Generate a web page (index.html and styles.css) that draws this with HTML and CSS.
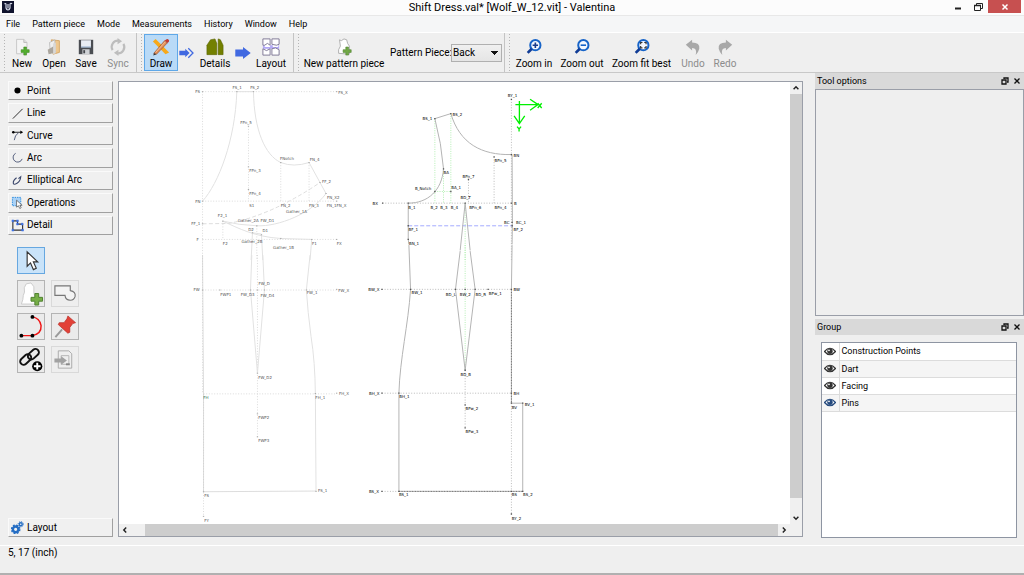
FILE: index.html
```html
<!DOCTYPE html>
<html lang="en">
<head>
<meta charset="utf-8">
<title>Shift Dress.val* [Wolf_W_12.vit] - Valentina</title>
<link rel="stylesheet" href="styles.css">
</head>
<body>
<div class="window">
<header class="titlebar">
  <svg class="applogo" viewBox="0 0 12 12"><rect width="12" height="12" fill="#10142e"/><path d="M2.5 3q1-1 1.500 0v4q.5 2 2 2T8 7V3q1-1.500 2 0M6 3v4.500" fill="none" stroke="#dfe4f4" stroke-width="1.100"/></svg>
  <h1 class="title">Shift Dress.val* [Wolf_W_12.vit] - Valentina</h1>
  <div class="winbtns">
    <button class="winbtn" aria-label="Minimize"><svg viewBox="0 0 12 12" width="12" height="12"><path d="M3 7.500h6" stroke="#222" stroke-width="2"/></svg></button>
    <button class="winbtn" aria-label="Restore"><svg viewBox="0 0 12 12" width="12" height="12"><path d="M4.500 4V2.500h6v5H9M2.500 4.500h6v5h-6z" fill="none" stroke="#222"/><path d="M2 4.500h7" stroke="#222" stroke-width="1.500"/></svg></button>
    <button class="winbtn close" aria-label="Close"><svg viewBox="0 0 12 12" width="12" height="12"><path d="M3.500 3.500l5 5m0-5l-5 5" stroke="#fff" stroke-width="1.500"/></svg></button>
  </div>
</header>
<nav class="menubar">
  <button>File</button><button>Pattern piece</button><button>Mode</button><button>Measurements</button><button>History</button><button>Window</button><button>Help</button>
</nav>
<div class="toolbars">
  <div class="toolbar file">
    <button class="tool"><svg viewBox="0 0 20 20"><path d="M4 1.500h8l3.500 3.500v12.500H4z" fill="#f4f4f4" stroke="#c4c4c4"/><path d="M12 1.500V5h3.500" fill="#ddd" stroke="#bbb"/><path d="M12 10h3v3h3v3h-3v3h-3v-3H9v-3h3z" fill="#52ad2e" stroke="#3c8420" stroke-width=".6"/></svg>New</button>
    <button class="tool"><svg viewBox="0 0 20 20"><path d="M7 2l9 1v13l-7 2z" fill="#eec78e" stroke="#d5a768"/><path d="M5 5l6-3v11l-5 4z" fill="#eee" stroke="#aaa" stroke-width=".7"/><path d="M3 13l7-4 2 7-8 2z" fill="#aaa59d"/><path d="M9 6l3-1v12l-3 1z" fill="#d8d8d8"/></svg>Open</button>
    <button class="tool"><svg viewBox="0 0 20 20"><path d="M2 2h16v16H2z" fill="#4a4d52"/><path d="M4.500 2.500h11v8h-11z" fill="#e8edf4"/><path d="M6 12.500h8V18H6z" fill="#cfd2d6"/><path d="M7 13.500h2V17H7z" fill="#44474c"/><path d="M4.500 10h11" stroke="#87a4c6"/></svg>Save</button>
    <button class="tool" disabled><svg viewBox="0 0 20 20"><path d="M4 13.500A7 7 0 0 1 11 3M16 6.500A7 7 0 0 1 9 17" fill="none" stroke="#bdbdbd" stroke-width="2.400"/><path d="M9.500 0l5 3.500-5 3.500zM10.500 13l-5 3.500 5 3.500z" fill="#bdbdbd"/></svg>Sync</button>
  </div>
  <div class="toolbar modes">
    <button class="tool checked"><svg viewBox="0 0 20 20"><path d="M4 1L1 4l14 14 4-2z" fill="#f7a91c"/><path d="M2 17L14 3l3 2.500L5 18z" fill="#e28f58" stroke="#964b28" stroke-width=".7"/><path d="M14 3q3-3 4.500-1T17 5.500z" fill="#c43c32"/><path d="M2 17l-.5 2.500L5 18z" fill="#333"/><path d="M4 16L15 4" stroke="#f6c294"/></svg>Draw</button>
    <svg class="arrow" viewBox="0 0 18 14"><path d="M0 4.500h7V2l5 5-5 5V9.500H0z" fill="#4169e1"/><path d="M10.500 1.500l5.500 5.500-5.500 5.500" fill="none" stroke="#4169e1" stroke-width="1.500"/></svg>
    <button class="tool"><svg viewBox="0 0 20 20"><path d="M1 18.500V8L5 2l5-1 2 5v12.500z" fill="#738000" stroke="#565f00" stroke-width=".6"/><path d="M13.500 18.500V1q3 0 3.500 3l2 4v10.500z" fill="#738000" stroke="#565f00" stroke-width=".6"/></svg>Details</button>
    <svg class="arrow" viewBox="0 0 18 14"><path d="M0 3h9V0l9 7-9 7v-3H0z" fill="#4169e1"/></svg>
    <button class="tool"><svg viewBox="0 0 20 20"><path d="M1 1h18v18H1z" fill="#fff"/><path d="M1 8h18v4H1z" fill="#b3a9f5"/><path d="M3 8l3-2 3 2v2H3zM12 7l4 1 2-1v3h-6z" fill="#fff"/><path d="M1 1h8v7l-3-2-3 2H1zM11 1h8v6l-3 1-5-1zM1 12l4 2 4-2v7H1zM11 12l4-1 4 2v6h-8z" fill="#fff" stroke="#77718f"/></svg>Layout</button>
  </div>
  <div class="toolbar pieces">
    <button class="tool"><svg viewBox="0 0 20 20"><path d="M5 2l2 1 3-2 3 1 1 4 2 3v9l-12-1V13l2-4z" fill="#fff" stroke="#aaa"/><path d="M12 10h3v3h3v3h-3v3h-3v-3H9v-3h3z" fill="#71a746" stroke="#4d7e2d" stroke-width=".6"/></svg>New pattern piece</button>
    <label for="piece">Pattern Piece:</label><select id="piece"><option>Back</option><option>Front</option></select>
  </div>
  <div class="toolbar zooms">
    <button class="tool"><svg viewBox="0 0 20 20"><circle cx="11.500" cy="8" r="5.700" fill="#f4f8ff" stroke="#1764c8" stroke-width="2.200"/><path d="M7.500 12L3 16.500" stroke="#103c96" stroke-width="3"/><path d="M11.500 5v6m-3-3h6" stroke="#173b8c" stroke-width="1.800"/></svg>Zoom in</button>
    <button class="tool"><svg viewBox="0 0 20 20"><circle cx="11.500" cy="8" r="5.700" fill="#f4f8ff" stroke="#1764c8" stroke-width="2.200"/><path d="M7.500 12L3 16.500" stroke="#103c96" stroke-width="3"/><path d="M8.500 8h6" stroke="#1764c8" stroke-width="1.800"/></svg>Zoom out</button>
    <button class="tool"><svg viewBox="0 0 20 20"><circle cx="11.500" cy="8" r="5.700" fill="#f4f8ff" stroke="#1764c8" stroke-width="2.200"/><path d="M7.500 12L3 16.500" stroke="#103c96" stroke-width="3"/><path d="M8.500 7V5h2m2 0h2v2m0 2v2h-2m-2 0h-2V9" fill="none" stroke="#333" stroke-width="1.300"/></svg>Zoom fit best</button>
    <button class="tool" disabled><svg viewBox="0 0 20 20"><path d="M2 7.500L9 2v3q9 0 8 7-1 4-4 7 2-8-4-8v3z" fill="#a8a8a8"/></svg>Undo</button>
    <button class="tool" disabled><svg viewBox="0 0 20 20"><path d="M18 7.500L11 2v3q-9 0-8 7 1 4 4 7-2-8 4-8v3z" fill="#a8a8a8"/></svg>Redo</button>
  </div>
</div>
<main class="main">
  <aside class="toolbox">
    <div class="sections">
      <button class="section"><svg viewBox="0 0 14 14"><circle cx="7" cy="7" r="3.300"/></svg>Point</button>
      <button class="section"><svg viewBox="0 0 14 14"><path d="M2 12.500L12.500 2" stroke="#222"/></svg>Line</button>
      <button class="section"><svg viewBox="0 0 14 14"><path d="M1 3.500h11" stroke="#111"/><circle cx="2.500" cy="3.500" r="1.300"/><path d="M10 1.500l3 2-3 2z"/><path d="M3.500 12Q4 7 8 4" fill="none" stroke="#4d5877"/></svg>Curve</button>
      <button class="section"><svg viewBox="0 0 14 14"><path d="M5 2.500a5 5 0 1 0 7 6" fill="none" stroke="#4d5877"/></svg>Arc</button>
      <button class="section"><svg viewBox="0 0 14 14"><path d="M6 4q-4 3-3.500 6 .5 2 4 0t4-7L8 5" fill="none" stroke="#39456a" stroke-width="1.200"/></svg>Elliptical Arc</button>
      <button class="section"><svg viewBox="0 0 14 14"><path d="M1.500 1.500h9v9h-9z" fill="#a9d1f6" stroke="#268ae0" stroke-dasharray="1.500 1"/><path d="M6 4.500v7.500l2-1.500 1.500 3 1.500-1-1.500-2.500H12z" fill="#fff" stroke="#555" stroke-width=".8"/></svg>Operations</button>
      <button class="section"><svg viewBox="0 0 14 14"><path d="M2 2h5v3.500h5.500V12H2z" fill="none" stroke="#333" stroke-width="1.200"/><path d="M1 1h2v2h-2zm5 0h2v2h-2zm0 3.500h2v2h-2zM11 4.500h2v2h-2zM1 11h2v2h-2zm10.500 0h2v2h-2z" fill="#3f73e8" stroke="#3f73e8" stroke-width=".5"/></svg>Detail</button>
    </div>
    <div class="tools">
      <button class="square on" aria-label="Select"><svg viewBox="0 0 26 26"><path d="M9 4v15l3.500-3.500 3 7 3-1.500-3-6.500H20z" fill="#fff" stroke="#333" stroke-width="1.200"/></svg></button>
      <span></span>
      <button class="square" aria-label="New detail"><svg viewBox="0 0 26 26"><path d="M8 3l5-1 3 4v7l3 11H3q2-5 2-9 2-3 1-8z" fill="#fff" stroke="#ccc"/><path d="M17 13h4v4h4v4h-4v4h-4v-4h-4v-4h4z" fill="#76ae47" stroke="#4f802f"/></svg></button>
      <button class="square off" aria-label="Union"><svg viewBox="0 0 26 26"><path d="M2.500 5h16v5q6 1 5 6-1 4-5 4-5 0-5.500-5H2.500z" fill="#f3f3f3" stroke="#777" stroke-width="1.200"/></svg></button>
      <button class="square" aria-label="Internal path"><svg viewBox="0 0 26 26"><path d="M3 22.500h11Q24 21 23.500 12 22 4 14 3" fill="none" stroke="#f01414" stroke-width="1.500"/><circle cx="3" cy="22.500" r="2"/><circle cx="14.500" cy="22.500" r="2"/><circle cx="14.500" cy="3" r="2"/></svg></button>
      <button class="square" aria-label="Pin"><svg viewBox="0 0 26 26"><path d="M10 16l-7 8" stroke="#999" stroke-width="2"/><path d="M16 2l8 7-3 1-3 4v5l-2 1L6 11l1-2h5l3-4z" fill="#e24137" stroke="#b52a24" stroke-width=".7"/></svg></button>
      <button class="square" aria-label="Link points"><svg viewBox="0 0 26 26"><g fill="none" stroke="#111" stroke-width="2"><rect x="9" y="4" width="13" height="7" rx="3.500" transform="rotate(-42 15.500 7.500)"/><rect x="1" y="9.500" width="13" height="7" rx="3.500" transform="rotate(-42 7.500 13)"/></g><circle cx="19.500" cy="20" r="5.300"/><path d="M19.500 16.500v7M16 20h7" stroke="#fff" stroke-width="2"/></svg></button>
      <button class="square off" aria-label="Insert node"><svg viewBox="0 0 26 26"><path d="M6 4h11l3 3v15H6z" fill="#eee" stroke="#aaa"/><path d="M9 9h8v9H9z" fill="none" stroke="#b5b5b5"/><path d="M2 12h7V9.500l6 4.500-6 4.500V16H2z" fill="#a2a2a2"/><path d="M14 18h4" stroke="#888" stroke-width="2"/></svg></button>
    </div>
    <button class="section layout"><svg viewBox="0 0 14 14"><circle cx="5" cy="9" r="3" fill="none" stroke="#256ec4" stroke-width="2.600"/><circle cx="5" cy="9" r="4.500" fill="none" stroke="#256ec4" stroke-width="1.500" stroke-dasharray="2 1.530"/><circle cx="10.500" cy="3.500" r="1.600" fill="none" stroke="#256ec4" stroke-width="1.500"/><circle cx="10.500" cy="3.500" r="2.800" fill="none" stroke="#256ec4" stroke-dasharray="1.200 1"/></svg>Layout</button>
  </aside>
  <section class="canvas">
    <svg class="scene" viewBox="0 0 2016 1323" preserveAspectRatio="xMinYMin meet">
      <g class="front" transform="translate(199 -5)">
        <path class="dot" d="M52 34H455M52 34V478M190 138V363M52 363H455M287 247V363M372 247V363M52 478H455M113 423V478M215 437V540"/>
        <path class="line" d="M155 34H205M155 34C150 180 100 310 52 363M205 34C207 150 240 225 287 247Q325 262 372 247L423 340C380 400 280 440 215 437Q160 435 113 423C160 445 210 470 285 475L380 478M202 458L198 540M229 462L233 540M202 458L215 460 229 462M380 478L375 540"/>
        <path class="dash" d="M52 431L130 430Q260 405 405 307"/>
        <path class="node" d="M50 34h4M153 34h4M203 34h4M188 138h4M188 260h4M188 328h4M285 247h4M370 247h4M403 307h4M421 340h4M50 363h4M50 431h4M111 423h4M213 437h4M200 458h4M227 464h4M285 475h4M378 478h4M453 34h4M453 363h4M453 478h4"/>
        <text x="30" y="38">FS</text><text x="142" y="26">FS_1</text><text x="195" y="26">FS_2</text><text x="460" y="40">FS_X</text><text x="165" y="130">FPn_5</text><text x="192" y="276">FPn_3</text><text x="192" y="344">FPn_4</text><text x="285" y="240">FNotch</text><text x="374" y="242">FN_4</text><text x="411" y="308">FF_2</text><text x="426" y="357">FN_X2</text><text x="30" y="368">FN</text><text x="192" y="380">S1</text><text x="287" y="380">FN_2</text><text x="372" y="380">FN_3</text><text x="425" y="380">FN_1FN_X</text><text x="303" y="398">Gather_1A</text><text x="98" y="412">F2_1</text><text x="158" y="425">Gather_2A</text><text x="226" y="427">FW_D1</text><text x="18" y="435">FF_1</text><text x="189" y="452">D2</text><text x="232" y="456">D1</text><text x="34" y="482">F</text><text x="113" y="494">F2</text><text x="169" y="490">Gather_2B</text><text x="264" y="506">Gather_1B</text><text x="381" y="494">F1</text><text x="455" y="494">FX</text>
      </g>
      <g class="front" transform="translate(199 520)">
        <path class="dot" d="M52 -47V417M52 105H455M217 0V547M55 417H455M55 417V785"/>
        <path class="line" d="M200 0L196 105 217 355 238 105 233 0M375 0L364 105Q368 170 378 245 390 320 391 417L393 710"/>
        <path class="line strong" d="M52 0L55 417V711L393 709"/>
        <path class="node" d="M50 105h4M102 105h4M194 105h4M215 105h4M236 105h4M362 105h4M215 355h4M389 416h4M215 477h4M215 546h4M53 711h4M391 710h4M53 785h4M453 103h4M453 415h4"/>
        <text x="25" y="108">FW</text><text x="105" y="122">FWP1</text><text x="167" y="124">FW_D3</text><text x="220" y="91">FW_D</text><text x="226" y="126">FW_D4</text><text x="365" y="117">FW_1</text><text x="460" y="110">FW_X</text><text x="219" y="372">FW_D2</text><text class="green" x="54" y="432">FH</text><text x="391" y="432">FH_1</text><text x="462" y="421">FH_X</text><text x="219" y="493">FWP2</text><text x="219" y="563">FWP3</text><text x="57" y="727">FS</text><text x="399" y="713">FS_1</text><text x="57" y="801">FY</text>
      </g>
      <g class="back" transform="translate(724 -5)">
        <path class="dot" d="M68 369H457M403 230V369M326 298V369M455 57V540"/>
        <path class="guide" d="M225 115V369M251 266V369M273 100V369M225 334H273M316 369V540"/>
        <path class="facing" d="M145 437H457"/>
        <path class="line" d="M225 115L273 100C300 190 365 225 455 223M225 115Q245 190 251 266C246 330 205 369 145 369V478L147 493M316 369L301 511M316 369L331 511M457 223L458 430 457 493"/>
        <path class="node" d="M66 369h4M143 369h4M223 115h4M271 100h4M249 266h4M223 334h4M271 334h4M314 369h4M324 298h4M401 230h4M453 57h4M453 223h4M453 369h4M455 427h4M143 437h4M455 437h4M143 478h4"/>
        <g class="axis"><path d="M467 73H535M511 57L535 73 511 90M479 62V130M463 107L479 130 495 107M534 69l12 14m0-14l-12 14M472 139l6 7 6-7m-6 7v8"/></g>
        <text x="444" y="51">BY_1</text><text x="188" y="119">BS_1</text><text x="278" y="107">BS_2</text><text x="461" y="230">BN</text><text x="404" y="246">BPn_5</text><text x="251" y="281">BA</text><text x="308" y="292">BPn_7</text><text x="165" y="330">B_Notch</text><text x="274" y="328">BA_1</text><text x="302" y="357">BD_T</text><text x="38" y="375">BX</text><text x="145" y="387">B_1</text><text x="212" y="387">B_2</text><text x="241" y="387">B_3</text><text x="273" y="387">B_4</text><text x="328" y="387">BPn_6</text><text x="404" y="387">BPn_4</text><text x="463" y="374">B</text><text x="433" y="431">BC</text><text x="469" y="433">BC_1</text><text x="461" y="454">BF_2</text><text x="146" y="454">BF_1</text><text x="147" y="495">BN_1</text>
      </g>
      <g class="back" transform="translate(724 490)">
        <path class="dot" d="M66 133H455M66 445H455M316 376V549M66 740H489M455 475V808"/>
        <path class="guide" d="M316 0V376"/>
        <path class="line" d="M147 0L152 133C145 240 120 340 117 445V740H489V475H455M301 18L287 133 316 376 346 133 331 18M457 0L455 133V475"/>
        <path class="dot strong" d="M455 133V475M117 740H489"/>
        <path class="node" d="M64 133h4M150 133h4M285 133h4M314 133h4M344 133h4M383 133h4M453 133h4M64 445h4M115 445h4M314 376h4M314 480h4M314 549h4M453 445h4M453 475h4M487 475h4M64 740h4M115 740h4M453 740h4M487 740h4M453 808h4"/>
        <text x="25" y="138">BW_X</text><text x="155" y="147">BW_1</text><text x="258" y="152">BD_L</text><text x="300" y="152">BW_2</text><text x="347" y="152">BD_R</text><text x="387" y="150">BPw_1</text><text x="461" y="138">BW</text><text x="302" y="393">BD_B</text><text x="27" y="449">BH_X</text><text x="118" y="460">BH_1</text><text x="461" y="449">BH</text><text x="456" y="491">BV</text><text x="495" y="483">BV_1</text><text x="317" y="496">BPw_2</text><text x="317" y="566">BPw_3</text><text x="27" y="744">BS_X</text><text x="117" y="755">BS_1</text><text x="456" y="755">BS</text><text x="490" y="755">BS_2</text><text x="456" y="825">BY_2</text>
      </g>
    </svg>
    <div class="vscroll"><svg viewBox="0 0 10 10"><path d="M3 6l2-2 2 2"/></svg><i class="thumb"></i><svg viewBox="0 0 10 10"><path d="M3 4l2 2 2-2"/></svg></div>
    <div class="hscroll"><svg viewBox="0 0 10 10"><path d="M6 3l-2 2 2 2"/></svg><i class="thumb"></i><svg viewBox="0 0 10 10"><path d="M4 3l2 2-2 2"/></svg></div>
  </section>
  <aside class="docks">
    <section class="dock options">
      <header><h2>Tool options</h2><button aria-label="Float tool options"><svg viewBox="0 0 8 8"><path d="M3 2V1h4v4H6M1 3h4v4H1z"/></svg></button><button aria-label="Close tool options"><svg viewBox="0 0 8 8"><path d="M1.500 1.500l5 5m0-5l-5 5"/></svg></button></header>
      <div class="frame"></div>
    </section>
    <section class="dock group">
      <header><h2>Group</h2><button aria-label="Float group"><svg viewBox="0 0 8 8"><path d="M3 2V1h4v4H6M1 3h4v4H1z"/></svg></button><button aria-label="Close group"><svg viewBox="0 0 8 8"><path d="M1.500 1.500l5 5m0-5l-5 5"/></svg></button></header>
      <div class="list">
        <table>
          <tr><td><svg viewBox="0 0 12 9"><use href="#eye"/></svg></td><td>Construction Points</td></tr>
          <tr><td><svg viewBox="0 0 12 9"><use href="#eye"/></svg></td><td>Dart</td></tr>
          <tr><td><svg viewBox="0 0 12 9"><use href="#eye"/></svg></td><td>Facing</td></tr>
          <tr class="current"><td><svg viewBox="0 0 12 9"><use href="#eye"/></svg></td><td>Pins</td></tr>
        </table>
      </div>
    </section>
  </aside>
</main>
<footer class="status">5, 17 (inch)</footer>
</div>
<svg class="defs"><defs><g id="eye"><path d="M.5 4.500Q6-2 11.500 4.500 6 11 .5 4.500z" fill="none" stroke="currentColor" stroke-width="1.200"/><circle cx="6" cy="4.200" r="2.700" fill="currentColor"/><circle cx="5" cy="3.300" r=".9" fill="#fff"/></g></defs></svg>
</body>
</html>
```

FILE: styles.css
```css
* { box-sizing: border-box; }
html, body { height: 100%; margin: 0; }
body { background: #efefef; color: #000; font: 10px/12px Roboto, "Noto Sans", sans-serif; }
button { font: inherit; color: inherit; background: none; border: 0; padding: 0; margin: 0; }
svg { display: block; flex: none; }
h1, h2 { margin: 0; font-weight: normal; }
.defs { position: absolute; width: 0; height: 0; }
.window { min-height: 100vh; display: flex; flex-direction: column; border-bottom: 2px solid #b0b0b0; }

.titlebar { height: 16px; display: flex; align-items: flex-start; padding: 0 3px 0 2px; background: #fcfcfc; border-bottom: 1px solid #e8e8e8; }
.applogo { width: 12px; height: 12px; margin-top: 1px; }
.title { flex: 1; text-align: center; padding-left: 62px; font-size: 11px; line-height: 15px; }
.winbtns { display: flex; }
.winbtn { width: 20px; height: 13px; display: flex; justify-content: center; align-items: center; }
.winbtn.close { width: 33px; background: #c75050; }

.menubar { height: 17px; display: flex; gap: 12px; padding: 0 6px; background: #f5f6f7; border-bottom: 1px solid #fff; font-size: 9px; }

.toolbars { height: 40px; display: flex; border-bottom: 1px solid #c8c8c8; }
.toolbar { display: flex; align-items: stretch; padding: 1px 2px 1px 7px; border-right: 1px solid #c4c4c4; background: radial-gradient(circle, #b5b5b5 1px, transparent 1px) 3px 0 / 3px 3px repeat-y; }
.tool { display: flex; flex-direction: column; align-items: center; padding-top: 2px; white-space: nowrap; border: 1px solid transparent; }
.tool svg { width: 18px; height: 20px; margin-bottom: 1px; }
.tool:disabled { color: #8c8c8c; }
.tool.checked { background: #b9daf7; border-color: #5fa8e8; }
.arrow { width: 18px; height: 12px; align-self: center; }
.file .tool { width: 32px; }
.toolbar.file { padding-left: 6px; }
.modes .tool { width: 34px; }
.modes .tool + .arrow + .tool { width: 38px; }
.toolbar.modes { padding-right: 3px; }
.toolbar.pieces { align-items: center; }
.pieces .tool { width: 86px; margin-right: 3px; align-self: stretch; }
.pieces label { width: 61px; white-space: nowrap; }
.pieces select { width: 51px; height: 18px; padding: 0 0 0 1px; font: inherit; color: #000; border: 1px solid #b0b0b0; border-radius: 0; appearance: none; background: linear-gradient(to bottom right, #111 50%, transparent 50%) 43px 6px / 4px 4px no-repeat, linear-gradient(to bottom left, #111 50%, transparent 50%) 39px 6px / 4px 4px no-repeat, linear-gradient(#f0f0f0, #e5e5e5); }
.toolbar.zooms { border-right: 0; padding-left: 5px; }
.zooms .tool { width: 48px; }
.zooms .tool:nth-child(3) { width: 71px; }
.zooms .tool:nth-child(n+4) { width: 32px; }

.main { flex: 1; display: flex; min-height: 0; }
.toolbox { width: 118px; padding: 8px 5px 8px 8px; display: flex; flex-direction: column; }
.section { height: 100%; width: 105px; display: flex; align-items: center; gap: 3px; padding-left: 2px; border: 1px solid #fafafa; border-right-color: #a0a0a0; border-bottom-color: #a0a0a0; background: #f0f0f0; }
.section svg { width: 13px; height: 13px; }
.sections { height: 154px; display: grid; grid-auto-rows: 1fr; gap: 3px; }
.tools { display: grid; grid-template-columns: 28px 28px; grid-auto-rows: 27px; gap: 6px; padding: 12px 9px; }
.square { border: 1px solid #b4b4b4; background: #ebebeb; }
.square svg { width: 26px; height: 25px; }
.square.on { background: #c9e3f9; border-color: #66a7e0; }
.square.off { border-color: #d9d9d9; background: #eee; }
.section.layout { height: 19px; margin-top: auto; }

.canvas { flex: 1; margin: 8px 0; display: grid; grid-template: minmax(0, 1fr) 12px / minmax(0, 1fr) 12px; border: 1px solid #9a9ea8; background: #f0f0f0; }
.scene { width: 100%; height: 100%; background: #fff; }
.scene text { font: 12px "DejaVu Sans", sans-serif; stroke: none; }
.front text { fill: #555; }
.front .green { fill: #2f6f4f; }
.back text { fill: #000; }
.scene path { fill: none; stroke-width: 3; }
.front .line { stroke: #e2e2e2; }
.front .line.strong { stroke: #ccc; stroke-width: 2; }
.front .dot { stroke: #c8c8c8; stroke-width: 2; stroke-dasharray: 3 5; }
.front .dash { stroke: #ddd; stroke-dasharray: 12 7; }
.front .node { stroke: #aaa; }
.back .line { stroke: #b4b4b4; }
.back .dot { stroke: #999; stroke-width: 2; stroke-dasharray: 3 5; }
.back .dot.strong { stroke: #444; }
.back .guide { stroke: #b4efb4; stroke-dasharray: 3 4; }
.back .facing { stroke: #a4abff; stroke-dasharray: 12 6; }
.back .node { stroke: #555; stroke-width: 4; }
.back .axis path { stroke: #00f000; stroke-width: 4; }
.vscroll, .hscroll { display: flex; align-items: center; }
.vscroll { flex-direction: column; }
.vscroll svg, .hscroll svg { width: 12px; height: 12px; }
.hscroll { grid-column: 1; }
.hscroll .thumb { margin-left: 14px; }
.vscroll .thumb { margin-bottom: 14px; }
.vscroll svg path, .hscroll svg path { fill: none; stroke: #222; stroke-width: 1.200; }
.thumb { flex: 1; background: #cdcdcd; align-self: stretch; }

.docks { width: 221px; padding-left: 12px; display: flex; flex-direction: column; gap: 3px; }
.dock { display: flex; flex-direction: column; }
.dock header { height: 16px; display: flex; align-items: center; gap: 4px; padding: 0 3px 0 2px; background: #d9d9d9; }
.dock h2 { flex: 1; font-size: 9px; line-height: 14px; }
.dock header svg { width: 8px; height: 8px; }
.dock header path { fill: none; stroke: #111; stroke-width: 1.300; }
.options { flex: 243; }
.group { flex: 226; }
.frame { flex: 1; border: 1px solid #9a9ea8; }
.list { flex: 1; margin: 7px 7px 7px 6px; border: 1px solid #8e95a2; background: #fff; }
.list table { width: 100%; border-collapse: collapse; font-size: 9px; line-height: 12px; }
.list td { height: 17px; padding: 0 2px; border-bottom: 1px solid #dcdcdc; }
.list td:first-child { width: 17px; border-right: 1px solid #dcdcdc; color: #333; }
.list tr:nth-child(even) { background: #f5f5f5; }
.list .current { background: #ededed; }
.list .current td:first-child { color: #24497d; }
.list svg { width: 12px; height: 9px; }

.status { height: 28px; padding: 1px 8px; border-top: 1px solid #fff; }
```
